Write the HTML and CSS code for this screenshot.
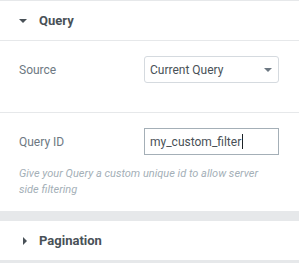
FILE: index.html
```html
<!DOCTYPE html>
<html lang="en">
<head>
    <meta charset="UTF-8">
    <meta name="viewport" content="width=device-width, initial-scale=1.0">
    <title>Query Settings</title>
    <link rel="stylesheet" href="styles.css">
</head>
<body>
    <section class="panel-section">
        <div class="section-head">
            <span class="caret-wrap"><span class="caret caret-down"></span></span>
            <span class="section-title">Query</span>
        </div>
        <div class="control">
            <label class="control-label">Source</label>
            <div class="select-box">
                <span>Current Query</span>
                <span class="caret caret-down small"></span>
            </div>
        </div>
        <div class="separator"></div>
        <div class="control control-top">
            <label class="control-label">Query ID</label>
            <div class="text-input">my_custom_filter<span class="cursor"></span></div>
        </div>
        <p class="help">Give your Query a custom unique id to allow server side filtering</p>
    </section>

    <section class="panel-section closed">
        <div class="section-head">
            <span class="caret-wrap"><span class="caret caret-right"></span></span>
            <span class="section-title">Pagination</span>
        </div>
    </section>
</body>
</html>
```

FILE: styles.css
```css
body {
    margin: 0;
    padding-top: 1px;
    background-color: #e6e8ea;
    font-family: Roboto, Arial, sans-serif;
    color: #6d7882;
}

.panel-section {
    background-color: white;
}

.panel-section.closed {
    margin-top: 10px;
}

.section-head {
    display: flex;
    align-items: center;
    height: 39px;
    padding-left: 19px;
    border-bottom: 1px solid #e6e8ea;
}

.closed .section-head {
    border-bottom: none;
}

.caret-wrap {
    display: flex;
    justify-content: center;
    width: 8px;
}

.section-title {
    font-size: 13px;
    font-weight: bold;
    color: #495157;
    margin-left: 12px;
}

.caret {
    display: inline-block;
    width: 0;
    height: 0;
}

.caret-down {
    border-left: 4px solid transparent;
    border-right: 4px solid transparent;
    border-top: 4px solid #495157;
}

.caret-right {
    border-top: 4px solid transparent;
    border-bottom: 4px solid transparent;
    border-left: 4px solid #495157;
    margin-left: 4px;
}

.caret.small {
    border-top-color: #6d7882;
}

.control {
    display: flex;
    align-items: center;
    justify-content: space-between;
    padding: 15px 20px 29px 19px;
}

.control-top {
    padding: 15px 20px 0 19px;
}

.control-label {
    font-size: 12px;
    color: #6d7882;
}

.select-box {
    display: flex;
    align-items: center;
    justify-content: space-between;
    box-sizing: border-box;
    width: 135px;
    height: 27px;
    padding: 0 6px 0 5px;
    border: 1px solid #d5dadf;
    border-radius: 3px;
    font-size: 12px;
    color: #495157;
}

.text-input {
    display: flex;
    align-items: center;
    box-sizing: border-box;
    width: 135px;
    height: 27px;
    padding: 0 5px;
    border: 1px solid #a4afb7;
    font-size: 12px;
    color: #495157;
}

.cursor {
    display: inline-block;
    width: 1px;
    height: 15px;
    background-color: #1d2327;
    margin-left: 1px;
}

.separator {
    height: 1px;
    background-color: #e6e8ea;
}

.help {
    margin: 0;
    padding: 11px 22px 13px 19px;
    font-size: 11px;
    line-height: 16px;
    font-style: italic;
    color: #a4afb7;
}
```
